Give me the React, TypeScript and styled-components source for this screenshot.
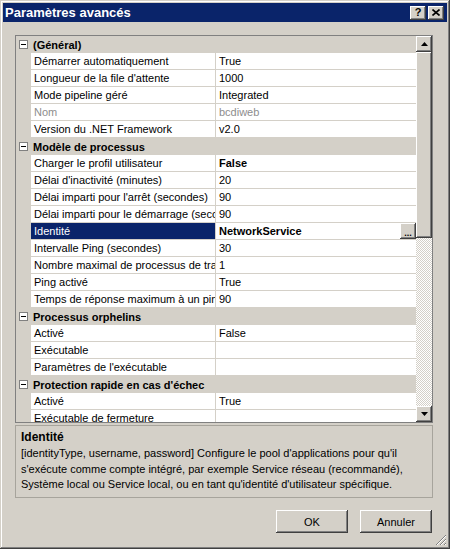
import React from "react";
import styled, { createGlobalStyle, css } from "styled-components";

const Global = createGlobalStyle`
  html, body { margin: 0; padding: 0; background: #d4d0c8; }
  body { font-family: "Liberation Sans", Arial, sans-serif; font-size: 11px; color: #000; }
  * { box-sizing: border-box; }
`;

const raised = css`
  background: #d4d0c8;
  box-shadow: inset -1px -1px #404040, inset 1px 1px #ffffff, inset -2px -2px #808080, inset 2px 2px #d4d0c8;
`;

const Window = styled.div`
  width: 450px;
  height: 549px;
  display: flex;
  flex-direction: column;
  background: #d4d0c8;
  box-shadow: inset -1px -1px #404040, inset 1px 1px #d4d0c8, inset -2px -2px #808080, inset 2px 2px #ffffff;
  position: relative;
  overflow: hidden;
`;

const TitleBar = styled.div`
  margin: 3px 3px 0 3px;
  height: 19px;
  background: #0a246a;
  display: flex;
  align-items: center;
  padding: 0 3px 0 2px;
`;

const Title = styled.div`
  flex: 1;
  color: #fff;
  font-weight: bold;
  font-size: 13px;
  font-family: "Liberation Sans", Arial, sans-serif;
`;

const CaptionButton = styled.div<{ $gap?: boolean }>`
  ${raised};
  width: 16px;
  height: 14px;
  margin-left: ${(p) => (p.$gap ? "2px" : "0")};
  display: flex;
  align-items: center;
  justify-content: center;
  font-weight: bold;
  font-size: 11px;
  line-height: 1;
  color: #000;
`;

const Body = styled.div`
  flex: 1;
  display: flex;
  flex-direction: column;
  padding: 13px 17px 0 15px;
`;

const GridBox = styled.div`
  height: 388px;
  border: 1px solid #808080;
  display: flex;
  background: #d4d0c8;
`;

const Rows = styled.div`
  flex: 1;
  overflow: hidden;
  display: flex;
  flex-direction: column;
`;

const Row = styled.div`
  flex: 0 0 17px;
  height: 17px;
  display: flex;
`;

const Gutter = styled.div`
  width: 15px;
  flex: 0 0 15px;
  display: flex;
  align-items: center;
  justify-content: center;
  background: #d4d0c8;
`;

const CatLabel = styled.div`
  flex: 1;
  font-weight: bold;
  padding: 1px 0 0 2px;
  line-height: 16px;
  white-space: nowrap;
`;

const NameCell = styled.div<{ $sel?: boolean; $dis?: boolean }>`
  width: 184px;
  flex: 0 0 184px;
  background: ${(p) => (p.$sel ? "#0a246a" : "#fff")};
  color: ${(p) => (p.$sel ? "#fff" : p.$dis ? "#8d8d8d" : "#000")};
  border-bottom: 1px solid #d4d0c8;
  padding: 1px 0 0 3px;
  line-height: 15px;
  white-space: nowrap;
  overflow: hidden;
`;

const Divider = styled.div`
  width: 1px;
  flex: 0 0 1px;
  background: #d4d0c8;
`;

const ValueCell = styled.div<{ $bold?: boolean; $dis?: boolean }>`
  flex: 1;
  display: flex;
  background: #fff;
  border-bottom: 1px solid #d4d0c8;
  font-weight: ${(p) => (p.$bold ? "bold" : "normal")};
  color: ${(p) => (p.$dis ? "#8d8d8d" : "#000")};
  white-space: nowrap;
  overflow: hidden;
`;

const ValueText = styled.div`
  flex: 1;
  padding: 1px 0 0 3px;
  line-height: 15px;
`;

const DotsButton = styled.div`
  ${raised};
  width: 16px;
  height: 16px;
  display: flex;
  align-items: flex-end;
  justify-content: center;
  font-weight: bold;
  font-size: 9px;
  line-height: 11px;
  color: #000;
`;

const ScrollBar = styled.div`
  width: 16px;
  flex: 0 0 16px;
  display: flex;
  flex-direction: column;
`;

const ScrollBtn = styled.div`
  ${raised};
  flex: 0 0 16px;
  height: 16px;
  display: flex;
  align-items: center;
  justify-content: center;
`;

const Thumb = styled.div`
  ${raised};
  flex: 0 0 186px;
`;

const Track = styled.div`
  flex: 1;
  background-color: #d4d0c8;
  background-image: repeating-conic-gradient(#ffffff 0 25%, #d4d0c8 0 50%);
  background-size: 2px 2px;
`;

const Desc = styled.div`
  margin-top: 2px;
  height: 73px;
  border: 1px solid #a7a49c;
  padding: 4px 5px;
  display: flex;
  flex-direction: column;
`;

const DescTitle = styled.div`
  font-weight: bold;
  font-size: 12px;
  line-height: 15px;
  margin-bottom: 1px;
`;

const DescLine = styled.div`
  line-height: 15.5px;
  white-space: nowrap;
`;

const Buttons = styled.div`
  margin-top: 12px;
  display: flex;
  justify-content: flex-end;
  gap: 12px;
  padding-right: 1px;
`;

const Button = styled.div`
  ${raised};
  width: 72px;
  height: 23px;
  display: flex;
  align-items: center;
  justify-content: center;
  font-size: 11px;
`;

const Grip = styled.svg`
  position: absolute;
  right: 3px;
  bottom: 3px;
`;

const ExpandBox = () => (
  <svg width="9" height="9" viewBox="0 0 9 9">
    <rect x="0.5" y="0.5" width="8" height="8" fill="#fff" stroke="#808080" />
    <line x1="2" y1="4.5" x2="7" y2="4.5" stroke="#000" />
  </svg>
);

const Arrow = ({ down }: { down?: boolean }) => (
  <svg width="7" height="4" viewBox="0 0 7 4">
    <polygon points={down ? "0,0 7,0 3.5,4" : "0,4 7,4 3.5,0"} fill="#000" />
  </svg>
);

type Item =
  | { kind: "cat"; label: string }
  | { kind: "prop"; name: string; value: string; bold?: boolean; dis?: boolean; sel?: boolean };

const items: Item[] = [
  { kind: "cat", label: "(Général)" },
  { kind: "prop", name: "Démarrer automatiquement", value: "True" },
  { kind: "prop", name: "Longueur de la file d'attente", value: "1000" },
  { kind: "prop", name: "Mode pipeline géré", value: "Integrated" },
  { kind: "prop", name: "Nom", value: "bcdiweb", dis: true },
  { kind: "prop", name: "Version du .NET Framework", value: "v2.0" },
  { kind: "cat", label: "Modèle de processus" },
  { kind: "prop", name: "Charger le profil utilisateur", value: "False", bold: true },
  { kind: "prop", name: "Délai d'inactivité (minutes)", value: "20" },
  { kind: "prop", name: "Délai imparti pour l'arrêt (secondes)", value: "90" },
  { kind: "prop", name: "Délai imparti pour le démarrage (secondes)", value: "90" },
  { kind: "prop", name: "Identité", value: "NetworkService", bold: true, sel: true },
  { kind: "prop", name: "Intervalle Ping (secondes)", value: "30" },
  { kind: "prop", name: "Nombre maximal de processus de travail", value: "1" },
  { kind: "prop", name: "Ping activé", value: "True" },
  { kind: "prop", name: "Temps de réponse maximum à un ping (secondes)", value: "90" },
  { kind: "cat", label: "Processus orphelins" },
  { kind: "prop", name: "Activé", value: "False" },
  { kind: "prop", name: "Exécutable", value: "" },
  { kind: "prop", name: "Paramètres de l'exécutable", value: "" },
  { kind: "cat", label: "Protection rapide en cas d'échec" },
  { kind: "prop", name: "Activé", value: "True" },
  { kind: "prop", name: "Exécutable de fermeture", value: "" },
  { kind: "prop", name: "Paramètres de l'exécutable de fermeture", value: "" },
];

export default function App() {
  return (
    <>
      <Global />
      <Window>
        <TitleBar>
          <Title>Paramètres avancés</Title>
          <CaptionButton>?</CaptionButton>
          <CaptionButton $gap>
            <svg width="8" height="7" viewBox="0 0 8 7">
              <path d="M0.5 0.5 L7.5 6.5 M7.5 0.5 L0.5 6.5" stroke="#000" strokeWidth="1.6" />
            </svg>
          </CaptionButton>
        </TitleBar>
        <Body>
          <GridBox>
            <Rows>
              {items.map((it, i) =>
                it.kind === "cat" ? (
                  <Row key={i}>
                    <Gutter>
                      <ExpandBox />
                    </Gutter>
                    <CatLabel>{it.label}</CatLabel>
                  </Row>
                ) : (
                  <Row key={i}>
                    <Gutter />
                    <NameCell $sel={it.sel} $dis={it.dis}>
                      {it.name}
                    </NameCell>
                    <Divider />
                    <ValueCell $bold={it.bold} $dis={it.dis}>
                      <ValueText>{it.value}</ValueText>
                      {it.sel && <DotsButton>...</DotsButton>}
                    </ValueCell>
                  </Row>
                )
              )}
            </Rows>
            <ScrollBar>
              <ScrollBtn>
                <Arrow />
              </ScrollBtn>
              <Thumb />
              <Track />
              <ScrollBtn>
                <Arrow down />
              </ScrollBtn>
            </ScrollBar>
          </GridBox>
          <Desc>
            <DescTitle>Identité</DescTitle>
            <DescLine>[identityType, username, password] Configure le pool d'applications pour qu'il</DescLine>
            <DescLine>s'exécute comme compte intégré, par exemple Service réseau (recommandé),</DescLine>
            <DescLine>Système local ou Service local, ou en tant qu'identité d'utilisateur spécifique.</DescLine>
          </Desc>
          <Buttons>
            <Button>OK</Button>
            <Button>Annuler</Button>
          </Buttons>
        </Body>
        <Grip width="12" height="12" viewBox="0 0 12 12">
          <path d="M11 1 L1 11 M11 5 L5 11 M11 9 L9 11" stroke="#808080" strokeWidth="1" />
          <path d="M11 2 L2 11 M11 6 L6 11 M11 10 L10 11" stroke="#ffffff" strokeWidth="1" />
        </Grip>
      </Window>
    </>
  );
}
